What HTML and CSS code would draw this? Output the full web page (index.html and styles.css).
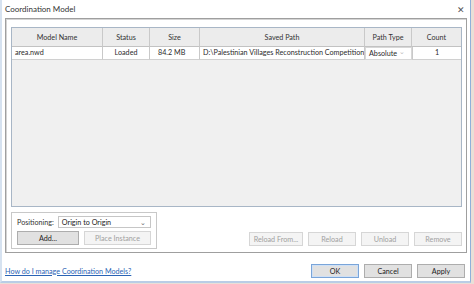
FILE: index.html
```html
<!DOCTYPE html>
<html lang="en">
  <head>
    <meta charset="UTF-8" />
    <title>Coordination Model</title>
    <link rel="stylesheet" href="styles.css">
  </head>
  <body>
    <div class="window">
      <!-- title bar -->
      <div class="titlebar">
        <span class="title">Coordination Model</span>
        <span class="close">&#x2715;</span>
      </div>

      <!-- main group -->
      <div class="group">
        <div class="grid">
          <div class="row head">
            <div class="c c-name">Model Name</div>
            <div class="c c-status">Status</div>
            <div class="c c-size">Size</div>
            <div class="c c-path">Saved Path</div>
            <div class="c c-type">Path Type</div>
            <div class="c c-count">Count</div>
          </div>
          <div class="row data">
            <div class="c c-name">area.nwd</div>
            <div class="c c-status">Loaded</div>
            <div class="c c-size">84.2 MB</div>
            <div class="c c-path">D:\Palestinian Villages Reconstruction Competition</div>
            <div class="c c-type"><span>Absolute</span><span class="arrow">&#x2304;</span></div>
            <div class="c c-count">1</div>
          </div>
        </div>

        <div class="lower">
          <div class="placing">
            <div class="pos-line">
              <span>Positioning:</span>
              <div class="combo"><span>Origin to Origin</span><span class="arrow">&#x2304;</span></div>
            </div>
            <div class="btns">
              <button class="btn add">Add...</button>
              <button class="btn off place">Place Instance</button>
            </div>
          </div>
          <div class="btns right">
            <button class="btn off wide">Reload From...</button>
            <button class="btn off">Reload</button>
            <button class="btn off">Unload</button>
            <button class="btn off">Remove</button>
          </div>
        </div>
      </div>

      <!-- footer -->
      <div class="footer">
        <a class="help" href="#">How do I manage Coordination Models?</a>
        <div class="btns">
          <button class="btn ok">OK</button>
          <button class="btn">Cancel</button>
          <button class="btn">Apply</button>
        </div>
      </div>
    </div>
  </body>
</html>
```

FILE: styles.css
```css
body {
  margin: 0;
  width: 474px;
  height: 284px;
  background: #eadfd7;
  font-family: Lato, "Open Sans", sans-serif;
  font-size: 7.2px;
  color: #2b2b2b;
  overflow: hidden;
}

/* dialog frame */
.window {
  width: 468px;
  height: 281px;
  background: #fff;
  border-left: 2px solid #d6e2f0;
  border-right: 1px solid #8fb0da;
  border-bottom: 2px solid #b9cde6;
}

.titlebar {
  height: 18px;
  display: flex;
  justify-content: space-between;
  align-items: center;
  padding: 0 5px 0 3px;
}
.title {
  font-size: 8px;
  color: #333;
}
.close {
  font-size: 9px;
  color: #555;
}

/* outer group box */
.group {
  margin-left: 3px;
  width: 451px;
  height: 225px;
  border: 1px solid #9f9f9f;
  box-shadow: inset 1px 1px 0 #d4d4d4;
  padding: 8px 4px 0 5px;
}

.grid {
  height: 178px;
  border: 1px solid #a8b6c6;
  background: #f0f0f0;
}
.row {
  display: flex;
}
.c {
  box-sizing: border-box;
  border-right: 1px solid #c9c9c9;
  white-space: nowrap;
  overflow: hidden;
}
.c:last-child {
  border-right: none;
}
.c-name { width: 91px; }
.c-status { width: 47px; }
.c-size { width: 50px; }
.c-path { width: 165px; }
.c-type { width: 47px; }
.c-count { flex: 1; }

.head .c {
  height: 19px;
  line-height: 19px;
  text-align: center;
  background: #ececec;
  border-bottom: 1px solid #c2c2c2;
  color: #333;
}
.data .c {
  height: 13px;
  line-height: 12px;
  background: #fff;
  border-bottom: 1px solid #d0d0d0;
  padding: 0 3px;
}
.data .c-status,
.data .c-count {
  text-align: center;
}
.data .c-size {
  padding-left: 8px;
}
.data .c-type {
  display: flex;
  justify-content: space-between;
  border: 1px solid #d7d7d7;
  padding-right: 6px;
}
.arrow {
  color: #bbb;
  font-size: 7px;
  line-height: 6px;
}
.data .c-count {
  border-left: 1px solid #c9c9c9;
}

/* lower part of the group */
.lower {
  display: flex;
  justify-content: space-between;
  align-items: flex-end;
  margin-top: 5px;
}
.placing {
  height: 37px;
  border: 1px solid #c8c8c8;
  padding: 3px 5px 0 5px;
  box-sizing: border-box;
  width: 146px;
}
.pos-line {
  display: flex;
  align-items: center;
  gap: 4px;
  color: #333;
}
.combo {
  flex: 1;
  height: 12px;
  border: 1px solid #c6c6c6;
  display: flex;
  justify-content: space-between;
  align-items: center;
  padding: 0 4px 0 3px;
  color: #222;
  box-sizing: border-box;
}
.combo .arrow {
  color: #666;
}
.btns {
  display: flex;
  gap: 5px;
}
.placing .btns {
  margin-top: 3px;
}
.right {
  margin-bottom: 3px;
}
.btn {
  width: 48px;
  height: 14px;
  padding: 0;
  font-family: inherit;
  font-size: 7.2px;
  white-space: nowrap;
  color: #222;
  background: #e1e1e1;
  border: 1px solid #adadad;
}
.btn.off {
  background: #f4f4f4;
  border-color: #d6d6d6;
  color: #a0a0a0;
}
.btn.wide {
  width: 54px;
}
.btn.add {
  width: 62px;
}
.btn.place {
  width: 67px;
}
.btn.ok {
  border-color: #7aa5d9;
  box-shadow: inset 0 0 0 1px #cfe0f5;
}

/* footer */
.footer {
  display: flex;
  justify-content: space-between;
  align-items: center;
  padding: 11px 5px 0 3px;
}
.help {
  color: #2a63b5;
  text-decoration: underline;
}
```
